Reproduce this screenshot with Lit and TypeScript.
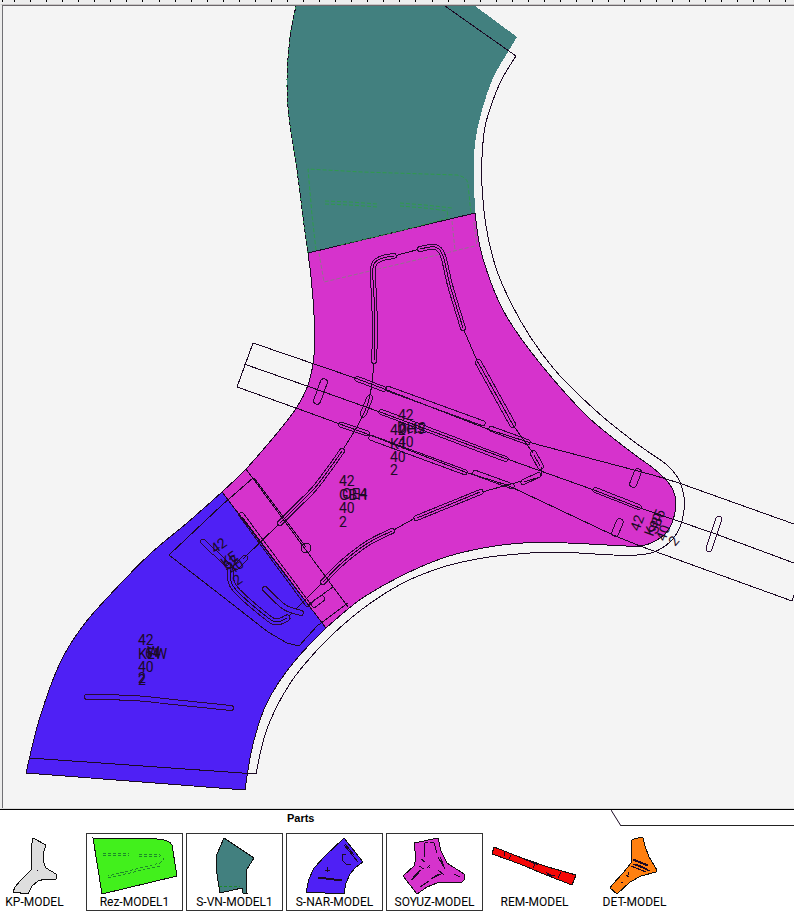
import { LitElement, html, svg, css } from "lit";
import { customElement } from "lit/decorators.js";

type Pt = [number, number];

/** Parses "x,y x,y ..." into points. */
const pts = (text: string): Pt[] =>
  text.trim().split(/\s+/).map((p) => p.split(",").map(Number) as Pt);

/** Smooth path segments through the points, starting after the first one. */
const through = (text: string): string => {
  const p = pts(text);
  let d = "";
  for (let i = 0; i < p.length - 1; i++) {
    const a = p[i - 1] ?? p[i];
    const b = p[i];
    const c = p[i + 1];
    const e = p[i + 2] ?? c;
    const n = [
      b[0] + (c[0] - a[0]) / 6, b[1] + (c[1] - a[1]) / 6,
      c[0] - (e[0] - b[0]) / 6, c[1] - (e[1] - b[1]) / 6,
      c[0], c[1],
    ].map((v) => v.toFixed(1));
    d += ` C${n.join(" ")}`;
  }
  return d;
};

const curve = (text: string): string => `M${text.trim().split(/\s+/)[0]}${through(text)}`;

/** Straight rounded slot between two points. */
const slot = (x1: number, y1: number, x2: number, y2: number, w = 5) => {
  const len = Math.hypot(x2 - x1, y2 - y1);
  const angle = (Math.atan2(y2 - y1, x2 - x1) * 180) / Math.PI;
  return svg`<rect class="slot" x="0" y=${-w / 2} width=${len} height=${w} rx=${w / 2}
    transform="translate(${x1} ${y1}) rotate(${angle})"></rect>`;
};

/** Bent slot that follows a curve, filled with the colour of its part. */
const hose = (points: string, fill: string, w = 6, centre = true) => {
  const d = curve(points);
  return svg`
    <path class="hose" d=${d} stroke-width=${w}></path>
    <path class="hose ${fill}" d=${d} stroke-width=${w - 2}></path>
    ${centre ? svg`<path class="thin" d=${d}></path>` : ""}`;
};

const note = (x: number, y: number, text: string, angle = 0) =>
  svg`<text class="note" transform="translate(${x} ${y}) rotate(${angle})">${text}</text>`;

const TEAL_LEFT = "308,253 303,217 297,170 289,117 287,80 290,37 296,6";
const TEAL_RIGHT = "517,37 508,52 493,78 482,110 475,143 474,175 475,213";
const UNION_RIGHT =
  "475,213 480,247 490,280 503,310 520,337 543,367 567,395 589,418 613,438 635,455 653,468 668,482 675,496 675,512 669,529 657,540 640,546 607,545 567,543 523,543 483,548 443,558 403,575 367,595 348,609 326,628";
const UNION_LEFT =
  "222,492 246,469 273,438 295,410 308,385 314,355 314,315 311,277 308,253";
const SLEEVE_RIGHT = "326,628 299,656 279,682 265,707 256,733 250,758 245,790";
const SLEEVE_LEFT = "26,773 40,717 60,663 82,627 108,597 150,554 187,523 222,492";
const SEAM_TOP = "516,56 503,77 493,100 485,127 482,157 482,186 486,226 496,268 511,303 531,338 554,369 580,396 609,422 640,446 667,465 679,480 684,497 684,510 680,527 670,542 654,552 637,555 613,555 553,552 507,555 477,559 443,567 403,583 365,607 333,634 310,658 291,682 275,710 264,738 256,774";

interface Part {
  name: string;
  framed: boolean;
  left: number;
  fill: string;
  shape: string;
  detail?: string;
  dashed?: string;
}

const PARTS: Part[] = [
  { name: "KP-MODEL", framed: false, left: -13, fill: "grey",
    shape: "M33 837L46 844L44 850L43 860L46 867L56 873L57 877L55 879L45 878L38 880L32 885L28 893L13 891L15 886L20 880L32 868L31 847Z",
    detail: "M37 869h1" },
  { name: "Rez-MODEL1", framed: true, left: 87, fill: "lime",
    shape: "M93 837L157 838Q170 839 172 844L177 875L102 893Z",
    dashed: "M103 852H129M103 854H129M139 853L160 854L164 858L160 862L108 875M139 855L160 856M160 865L108 877" },
  { name: "S-VN-MODEL1", framed: true, left: 187, fill: "teal",
    shape: "M224 837L254 857L247 868L246 880L247 892H243L242 887L220 892L216 867L217 853Z",
    dashed: "M219 885L240 885" },
  { name: "S-NAR-MODEL", framed: true, left: 287, fill: "blue",
    shape: "M344 837L363 861L356 866L350 873L346 882L344 893L306 891L309 878L314 867L325 855Z",
    detail: "M318 876L342 879M318 877L342 880M327 866V871M325 869H330M344 844L358 861M345 843L354 854M346 853L342 854L342 859L346 863L351 864" },
  { name: "SOYUZ-MODEL", framed: true, left: 387, fill: "pink",
    shape: "M414 842L438 837L441 850L447 862L464 873L465 878L462 881L437 882L427 886L417 893L403 875L414 865L416 857Z",
    detail: "M424 842V856M425 842L428 841M430 841L434 842L437 852M421 858L425 861M419 865L424 868M438 856L442 863L445 868M440 856L444 865M411 879L420 869M412 879L421 869M427 867L430 864M431 878L443 872M432 877L439 873M420 886L429 880M438 869L444 874M454 873L460 876M428 865L430 867" },
  { name: "REM-MODEL", framed: false, left: 487, fill: "red",
    shape: "M494 846L492 853L520 863L546 874L572 884L576 874L548 866L522 857Z",
    detail: "M524 858L538 864M536 861L533 867M547 873L555 875M546 871L552 876M561 871L558 877M505 851L504 855M511 854L509 858" },
  { name: "DET-MODEL", framed: false, left: 587, fill: "orange",
    shape: "M632 839Q636 836 643 837L645 845L649 856L657 869L656 871L641 875L630 881L617 893L610 887L612 884L623 872L631 862Z",
    detail: "M633 858L648 864M633 859L648 865M633 863L650 870M636 863L647 868M631 865L646 871M628 871L629 874M626 874L629 876M621 881L623 882" },
];

@customElement("app-root")
export class AppRoot extends LitElement {
  static styles = css`
    :host {
      display: block;
      min-height: 100vh;
      overflow: hidden;
      background: #fff;
      color: #000;
      font-family: Roboto, "Liberation Sans", sans-serif;
      font-size: 12px;
    }
    .ruler { display: block; width: 100%; height: 4px; background: #ededed; }
    .workspace {
      background: #f4f4f4;
      border-top: 1px solid #c9c5c5;
      border-left: 2px solid #ececec;
      border-bottom: 1px solid #ddd;
    }
    .frame { border-top: 1px solid #6a666a; border-left: 1px solid #707074; }
    .drawing { display: block; width: 100%; height: auto; shape-rendering: crispEdges; }
    .teal { fill: #42807f; }
    .pink { fill: #d633cc; }
    .blue { fill: #4f20f5; }
    .lime { fill: #42f01c; }
    .grey { fill: #dedede; }
    .red { fill: #f50808; }
    .orange { fill: #ff8010; }
    .thin { fill: none; stroke: #1b0a24; stroke-width: 1; }
    .slot { fill: none; stroke: #2a0a35; stroke-width: 1; }
    .hose { fill: none; stroke: #2a0a35; stroke-linecap: round; stroke-linejoin: round; }
    .hose.pink { stroke: #d633cc; }
    .hose.blue { stroke: #4f20f5; }
    .under {
      fill: none;
      stroke: #2f9a4c;
      stroke-width: 1;
      stroke-dasharray: 4 2;
      shape-rendering: geometricPrecision;
    }
    .under.soft { stroke: #95708f; }
    .edge { fill: none; stroke: #2f9a4c; stroke-width: 1; stroke-dasharray: 2 4; }
    .note { font-family: Roboto, sans-serif; font-size: 14px; font-weight: 400; fill: #1b0a24; }
    .strip { display: flex; height: 16px; border-top: 1px solid #000; }
    .title {
      flex: 0 0 77%;
      margin: 0;
      padding-right: 10px;
      box-sizing: border-box;
      text-align: center;
      font: bold 11px/16px "Liberation Sans", sans-serif;
    }
    .notch { flex: none; width: 10px; height: 16px; }
    .rest { flex: 1; border-bottom: 1px solid #222; }
    .parts {
      display: flex;
      gap: 3px;
      margin: 7px 0 0 -14px;
      padding: 0;
      list-style: none;
    }
    .part {
      display: flex;
      flex-direction: column;
      align-items: center;
      box-sizing: border-box;
      width: 97px;
      height: 78px;
      padding: 0;
      border: 1px solid transparent;
      background: none;
      color: inherit;
      font: inherit;
      line-height: 16px;
    }
    .part.framed { border-color: #333; }
    .thumb { display: block; width: 95px; height: 60px; shape-rendering: crispEdges; }
    .outline { stroke: #111; stroke-width: 1; }
    .dashed { fill: none; stroke: #1c8a28; stroke-width: 1; stroke-dasharray: 3 2; }
  `;

  private ruler() {
    const ticks = Array.from({ length: 120 }, (_, i) => Math.round(14 + i * 16.06));
    return html`<svg class="ruler" aria-hidden="true">
      ${[2, ...ticks].map((x) => svg`<rect x=${x} y="0" width="1" height="2"></rect>`)}
    </svg>`;
  }

  private drawing() {
    return html`<svg class="drawing" viewBox="3 6 791 802" role="img" aria-label="Pattern drawing">
      <path class="teal" d="${curve(TEAL_LEFT)} L475 6 L517 37 ${through(TEAL_RIGHT)} Z"></path>
      <path class="thin" d=${curve(TEAL_LEFT)}></path>
      <path class="edge" d=${curve(TEAL_LEFT)}></path>
      <path class="pink" d="M308 253 L475 213 ${through(UNION_RIGHT)} L222 492 ${through(UNION_LEFT)} Z"></path>
      <path class="blue" d="M222 492 L326 628 ${through(SLEEVE_RIGHT)} L26 773 ${through(SLEEVE_LEFT)} Z"></path>
      <path class="thin" d="M308 253 L475 213 ${through(UNION_RIGHT)} L222 492 ${through(UNION_LEFT)}"></path>
      <path class="thin" d="M326 628 ${through(SLEEVE_RIGHT)} L26 773 ${through(SLEEVE_LEFT)}"></path>
      <path class="thin" d="M445 6 L516 56 ${through(SEAM_TOP)} L30 758"></path>

      <path class="under" d="M316 250 L312 215 L308 169 L362 172 L457 175 Q467 177 468 184 L471 214"></path>
      <path class="under" d="M325 201 L350 202 L378 204 M325 204 L350 205 L378 207 M400 203 L425 205 L452 208 M400 206 L425 208 L448 211 M340 245 L400 231 L448 218 L447 209"></path>
      <path class="under soft" d="M319 253 L324 282 L475 246 M452 221 L455 250 M474 222 L477 246"></path>

      <path class="thin" d="M794 524 L679 483 L653 475 L528 442 L490 430 L387 390 L355 378 L253 343 L237 387 L296 408 L370 435 L465 472 L507 485 L613 535 L640 546 L792 601 L794 595"></path>
      <path class="thin" d="M244 364 L307 386 L380 412 L507 459 L594 490 L640 508 L713 533 L794 563"></path>

      <path class="thin" d="M394 256 L420 249 M463 328 L478 363 M513 425 L533 453 M541 467 Q543 473 540 476 M522 481 L482 492 M415 518 L392 531 M323 582 L305 600 L287 618"></path>
      <path class="thin" d=${curve("374,361 372,383 368,403 358,425 342,451")}></path>
      <path class="thin" d="M279 524 L243 559"></path>
      ${hose("394,256 380,259 373,268 374,297 375,330 374,361", "pink")}
      ${hose("420,249 435,247 443,256 450,285 463,328", "pink")}
      ${slot(325, 379, 316, 404, 7)}
      ${slot(371, 395, 362, 417, 6)}
      ${slot(355, 378, 386, 390)}
      ${slot(386, 388, 485, 424, 5)}
      ${slot(489, 428, 530, 443)}
      ${slot(379, 411, 508, 460)}
      ${slot(593, 489, 641, 508)}
      ${slot(339, 424, 369, 434)}
      ${slot(369, 437, 467, 473)}
      ${slot(473, 472, 514, 487)}
      ${slot(477, 360, 514, 427, 6)}
      <path class="thin" d="M478 362 L513 425 M534 455 L540 466 M540 477 L524 482 M480 492 L417 518"></path>
      ${slot(532, 451, 542, 469, 6)}
      ${slot(541, 474, 521, 483)}
      ${slot(483, 491, 414, 519)}
      ${hose("392,531 368,543 343,562 323,582", "pink", 6)}
      ${hose("342,451 330,468 314,489 296,507 280,523", "pink", 6)}
      ${slot(639, 469, 632, 487, 7)}
      ${slot(621, 519, 614, 536, 7)}
      ${slot(720, 516, 708, 552, 6)}

      <path class="thin" d="M246 469 L348 607 M254 478 L306 547"></path>
      <circle class="thin" cx="306" cy="548" r="5"></circle>
      <path class="thin" d="M253 478 L222 505 L169 555 L227 600 L268 632 L287 643 L299 646 L317 626 L348 603 M333 587 L309 604"></path>
      ${slot(240, 513, 309, 606, 5)}
      <path class="thin" d="M242 517 L307 603"></path>
      ${slot(312, 606, 324, 597, 6)}
      ${slot(247, 556, 234, 569, 5)}
      ${slot(201, 540, 228, 565, 5)}
      ${hose("230,570 231,581 238,592 267,617 277,622 287,618", "blue", 7)}
      ${hose("265,589 274,598 286,608 301,613", "blue", 6, false)}
      ${hose("87,697 133,698 173,702 231,708", "blue", 6, false)}

      ${note(138, 645, "42")} ${note(138, 659, "KEW")} ${note(145, 658, "64")} ${note(147, 657, "W")}
      ${note(138, 672, "40")} ${note(138, 685, "2")} ${note(138, 683, "2")}
      ${note(398, 420, "42")} ${note(390, 435, "42")} ${note(397, 433, "Det2")} ${note(399, 434, "0H5")}
      ${note(390, 449, "K1")} ${note(398, 447, "40")} ${note(390, 462, "40")} ${note(390, 475, "2")}
      ${note(339, 486, "42")} ${note(339, 500, "GBH")} ${note(342, 499, "OE4")}
      ${note(339, 513, "40")} ${note(339, 527, "2")}
      ${note(639, 532, "42", -70)} ${note(653, 537, "Kep", -70)} ${note(657, 535, "SB5", -70)}
      ${note(665, 542, "40", -70)} ${note(675, 547, "2", -50)}
      ${note(215, 554, "42", -35)} ${note(225, 568, "KE", -35)} ${note(227, 571, "62", -35)}
      ${note(232, 575, "40", -35)} ${note(237, 586, "2", -35)}
    </svg>`;
  }

  private part(p: Part) {
    return html`<li>
      <button type="button" class="part ${p.framed ? "framed" : ""}">
        <svg class="thumb" viewBox="${p.left} 833 95 60" aria-hidden="true">
          <path class="outline ${p.fill}" d=${p.shape}></path>
          ${p.detail ? svg`<path class="thin" d=${p.detail}></path>` : ""}
          ${p.dashed ? svg`<path class="dashed" d=${p.dashed}></path>` : ""}
        </svg>
        <span>${p.name}</span>
      </button>
    </li>`;
  }

  render() {
    return html`
      ${this.ruler()}
      <main class="workspace"><div class="frame">${this.drawing()}</div></main>
      <section>
        <div class="strip">
          <h2 class="title">Parts</h2>
          <svg class="notch" viewBox="0 0 10 16" aria-hidden="true"><path class="thin" d="M0 0L10 16"></path></svg>
          <div class="rest"></div>
        </div>
        <ul class="parts">${PARTS.map((p) => this.part(p))}</ul>
      </section>
    `;
  }
}
